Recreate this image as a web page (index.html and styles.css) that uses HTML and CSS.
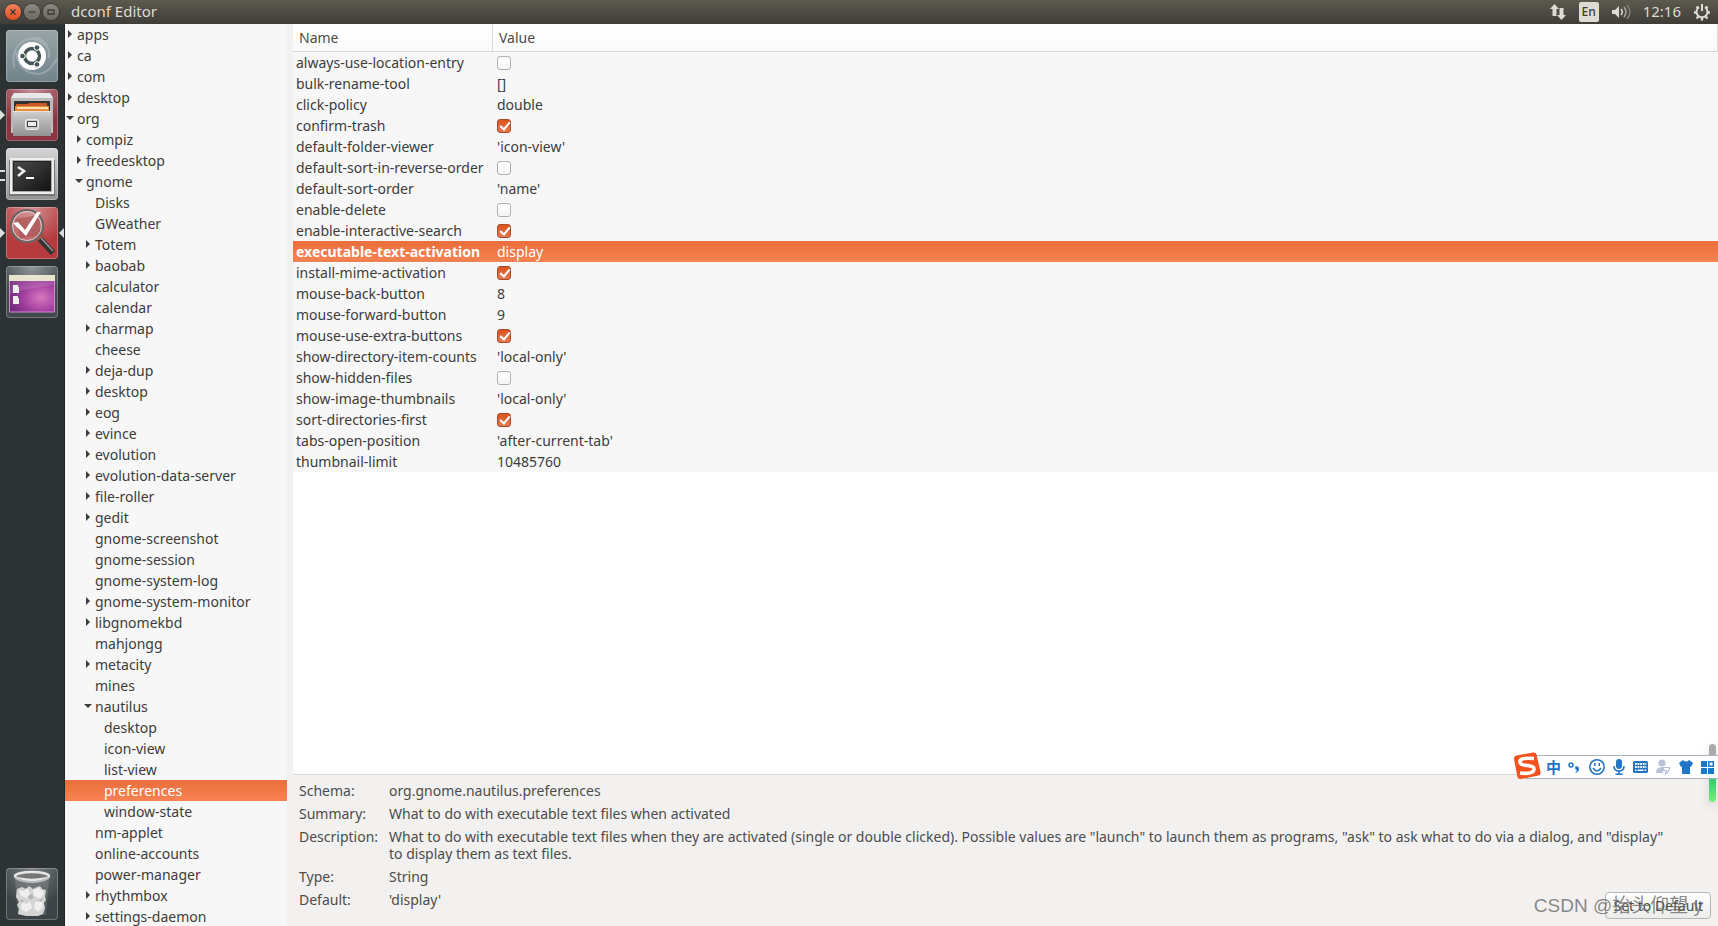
FILE: index.html
```html
<!DOCTYPE html>
<html lang="en">
<head>
<meta charset="utf-8">
<title>dconf Editor</title>
<link rel="stylesheet" href="styles.css">
</head>
<body>
<header class="panel">
  <div class="window-buttons">
    <button class="wbtn close" aria-label="Close"><svg viewBox="0 0 16 16"><path d="M5.5 5.5l5 5M10.500 5.500l-5 5"/></svg></button>
    <button class="wbtn" aria-label="Minimize"><svg viewBox="0 0 16 16"><path d="M4.500 8h7"/></svg></button>
    <button class="wbtn" aria-label="Maximize"><svg viewBox="0 0 16 16"><path d="M5 6h6v4H5z"/></svg></button>
  </div>
  <h1 class="title">dconf Editor</h1>
  <div class="indicators">
    <svg class="ind" width="18" height="18" viewBox="0 0 18 18"><path fill="#dfdbd2" d="M5.500 1L10 6H7.500v7h-4V6H1zM12.500 17L8 12h2.500V5h4v7H17z"/></svg>
    <span class="lang">En</span>
    <svg class="ind" width="20" height="18" viewBox="0 0 20 18"><path fill="#dfdbd2" d="M1 7h3l4-4v12l-4-4H1z"/><g fill="none" stroke-width="1.500"><path stroke="#dfdbd2" d="M10 6q2.500 3 0 6"/><path stroke="#aaa79f" d="M13 4q4 5 0 10"/><path stroke="#817e76" d="M16 2q6 7 0 14"/></g></svg>
    <time>12:16</time>
    <svg class="ind" width="18" height="18" viewBox="0 0 18 18"><g fill="none" stroke="#dfdbd2"><path stroke-width="2" d="M6 4.200A5.500 5.500 0 1 0 12 4.200M9 1v7"/><path stroke-width="2.400" d="M3.500 3.500l2 2M14.500 3.500l-2 2M1 9.500h2.500M17 9.500h-2.500M3.500 15.500l2-2M14.500 15.500l-2-2M9 17.500V15"/></g></svg>
  </div>
</header>
<div class="workspace">
  <nav class="launcher" aria-label="Launcher">
    <button class="app dash" aria-label="Search your computer"><svg viewBox="0 0 52 52"><g fill="none" stroke="#b8c4c8" stroke-opacity=".45" stroke-width="2"><path d="M8 38Q4 8 31 8Q44 12 43 28M10 22Q13 43 32 44Q44 43 51 28M15 12Q30 4 42 18"/></g><circle cx="26" cy="26" r="14" fill="#fff"/><circle cx="26" cy="26" r="7.500" fill="none" stroke="#45565b" stroke-width="3.400"/><g fill="#45565b" stroke="#fff"><circle cx="16.500" cy="26" r="2.800"/><circle cx="31" cy="17.600" r="2.800"/><circle cx="31" cy="34.400" r="2.800"/></g></svg></button>
    <button class="app files running" aria-label="Files"><svg viewBox="0 0 52 52"><defs><linearGradient id="gf" x2="0" y2="1"><stop stop-color="#cfcfcf"/><stop offset="1" stop-color="#929292"/></linearGradient></defs><path fill="#999" d="M5 8l3-4h36l3 4v36H5z"/><path fill="#e8e8e8" d="M5 9l3-5h36l3 5z"/><path fill="#bcbcbc" d="M5 9h42v35H5z"/><path fill="#333" d="M8 12h36v12H8z"/><path fill="#cb5b22" d="M10 15h12l1-1h18v4H10z"/><path fill="#ef8b3c" d="M9 17h34v7H9z"/><path fill="#ffe2ad" d="M11 18h31v2H11z"/><path fill="url(#gf)" d="M7 22h38v25H7z"/><path fill="#e2e2e2" d="M7 22h38v1H7z"/><rect x="19.500" y="30.500" width="13" height="10" rx="2" fill="#ccc" stroke="#eee"/><rect x="21.500" y="32.500" width="9" height="5" fill="#eee" stroke="#444"/></svg></button>
    <button class="app terminal running double" aria-label="Terminal"><svg viewBox="0 0 52 52"><defs><linearGradient id="gt" x2="1" y2="1"><stop stop-color="#4a4a4a"/><stop offset=".5" stop-color="#303030"/><stop offset="1" stop-color="#111"/></linearGradient></defs><path fill="#777" d="M3 12h46v36H3z"/><path fill="#eee" d="M4 10h44v36H4z"/><path fill="#aaa" d="M6 12h40v32H6z"/><path fill="url(#gt)" stroke="#222" d="M7.500 13.500h37v29h-37z"/><path fill="none" stroke="#eee" stroke-width="2.600" d="M12 19l6 4-6 5"/><path stroke="#fff" stroke-width="2" d="M20 30h8"/></svg></button>
    <button class="app dconf running focused" aria-label="dconf Editor"><svg viewBox="0 0 52 52"><path fill="#8c2528" fill-opacity=".7" d="M9 12l23-4 5 20-23 3z"/><circle cx="21" cy="19" r="16" fill="#d8a0a0" fill-opacity=".4" stroke="#686664" stroke-width="2.200"/><circle cx="21" cy="19" r="14.500" fill="none" stroke="#ded0cf"/><path fill="#fff" d="M7 16l5-1 7 8L31 5h4L20 29z"/><path stroke="#333" stroke-width="6" d="M34 32l13 14"/><path stroke="#999" stroke-width="1.400" d="M35 31l12 13"/></svg></button>
    <button class="app desk" aria-label="Show desktop"><svg viewBox="0 0 52 52"><defs><radialGradient id="gp" cx=".7" cy=".6" r=".8"><stop stop-color="#d879be"/><stop offset=".45" stop-color="#a744a3"/><stop offset="1" stop-color="#672474"/></radialGradient></defs><path fill="url(#gp)" stroke="#d68ad2" d="M3.500 10h45v36h-45z"/><path fill="#e9e5cf" d="M3 9h46v6H3z"/><path fill="#fff" fill-opacity=".13" d="M4 15h44v4Q22 22 4 28z"/><path fill="#eee" d="M7 19h5v2h1v6H7zM7 30h5v2h1v6H7z"/></svg></button>
    <button class="app trash" aria-label="Trash"><svg viewBox="0 0 52 52"><path fill="#aaa" fill-opacity=".25" d="M9 12h34l-3 35H12z"/><path fill="#d4d4d4" d="M11 21l5-2 4 2 3-3 4 3 4-2 3-1 2 3 4 1-1 7 1 3-2 3 1 5-2 6-5 2H20l-8-2 1-5-2-4 2-3-3-5z"/><path fill="#efefef" d="M13 22l5 1 3-3 3 5-3 5-6-2zM27 22l6-2 5 5-4 6-6-3zM16 34l5 2 3-3 2 7-6 4-5-3zM29 34l7-1 1 6-5 5-4-4z"/><path fill="#b4b4b4" d="M22 28l4-2 2 4-4 2zM32 32l5-2-2 4zM14 31l4 2-2 2z"/><ellipse cx="26" cy="8" rx="17" ry="4" fill="#777" stroke="#e6e6e6" stroke-width="2.500"/><path fill="none" stroke="#bbb" stroke-width="2" d="M9 10q17 8 34 0"/></svg></button>
  </nav>
  <ul class="tree" id="tree"></ul>
  <main class="content">
    <table class="keys">
      <thead><tr><th scope="col">Name</th><th scope="col">Value</th></tr></thead>
      <tbody id="keys"></tbody>
    </table>
    <section class="details">
      <dl>
        <dt>Schema:</dt><dd>org.gnome.nautilus.preferences</dd>
        <dt>Summary:</dt><dd>What to do with executable text files when activated</dd>
        <dt>Description:</dt><dd>What to do with executable text files when they are activated (single or double clicked). Possible values are "launch" to launch them as programs, "ask" to ask what to do via a dialog, and "display" to display them as text files.</dd>
        <dt>Type:</dt><dd>String</dd>
        <dt>Default:</dt><dd>'display'</dd>
      </dl>
      <button class="default-btn">Set to Default</button>
    </section>
  </main>
</div>
<div class="scroll-thumb"></div>
<div class="ime">
  <svg class="ime-logo" width="30" height="30" viewBox="0 0 30 30"><path fill="#f4511e" d="M2 8Q1.500 5 4.500 4.500L21 1.500q3-.5 3.500 2L28.500 21q.5 3-2 3.500L9 28q-3 .5-3.500-2z"/><path fill="none" stroke="#fff" stroke-width="3.600" d="M22 7.500Q7 6 8 11.500c1 5 14 1 14 6.500 0 4-6 5-14 4"/></svg>
  <span class="ime-zh">中</span>
  <svg width="14" height="18" viewBox="0 0 14 18"><circle cx="4" cy="7" r="2" fill="none" stroke="#2175c9" stroke-width="1.500"/><path fill="#2175c9" d="M8 9q4-2 4 2 0 3-4 4 2-2 2-3-2 0-2-3z"/></svg>
  <svg width="18" height="18" viewBox="0 0 18 18"><g fill="none" stroke="#2175c9" stroke-width="1.600"><circle cx="9" cy="9" r="7.200"/><path d="M5 10q4 6 8 0"/></g><path fill="#2175c9" d="M6 5h1.500v3H6zM10.500 5H12v3h-1.500z"/></svg>
  <svg width="14" height="18" viewBox="0 0 14 18"><rect x="4" y="1" width="6" height="10" rx="3" fill="#2175c9"/><path fill="none" stroke="#2175c9" stroke-width="1.600" d="M2 8q0 5 5 5t5-5M7 13v3M3.500 16.200h7"/></svg>
  <svg width="17" height="18" viewBox="0 0 17 18"><rect x="1" y="3" width="15" height="12" rx="1.500" fill="#2175c9"/><path stroke="#fff" stroke-width="2" stroke-dasharray="1.800 .8" d="M3 6h11.400M3 9h11.400"/><path stroke="#fff" stroke-width="1.600" d="M3 12.200h1.500M5.500 12.200h6M12.600 12.200h1.600"/></svg>
  <svg width="16" height="18" viewBox="0 0 16 18"><g fill="#b6c2d8"><circle cx="7" cy="5" r="3.500"/><path d="M1 15q0-6 6-6 3 0 4 1H8v5z"/></g><path fill="#fff" stroke="#b6c2d8" stroke-width="1.200" d="M8.500 9.500h6q0 4-4 6.500 1-2 1-3.500h-3z"/></svg>
  <svg width="16" height="18" viewBox="0 0 16 18"><path fill="#2175c9" d="M5 2q3 3 6 0l4 3-2 4-1-.5V16H4V8.500L3 9 1 5z"/></svg>
  <svg width="15" height="18" viewBox="0 0 15 18"><path fill="#2175c9" d="M1 3h6v6H1zM1 10h6v6H1zM8 10h6v6H8z"/><path fill="#fff" stroke="#2175c9" stroke-width="1.500" d="M8.800 3.800h4.500v4.500H8.800z"/></svg>
</div>
<div class="watermark">CSDN @抬头仰望 y</div>
<script src="app.js"></script>
</body>
</html>
```
FILE: styles.css
```css
* { box-sizing: border-box; }
body {
  margin: 0;
  height: 100vh;
  overflow: hidden;
  display: flex;
  flex-direction: column;
  font: 14px/21px "Noto Sans", "Noto Sans CJK SC", sans-serif;
  color: #3c3c3c;
  background: #f2f1f0;
}
button { font: inherit; color: inherit; padding: 0; border: 0; }
.panel {
  flex: none;
  height: 24px;
  display: flex;
  align-items: center;
  padding: 0 7px 1px 5px;
  background: linear-gradient(#5c594f, #3e3d38);
  color: #dfdbd2;
  font-size: 15px;
}
.window-buttons { display: flex; gap: 3px; }
.wbtn {
  width: 16px;
  height: 16px;
  border-radius: 50%;
  background: linear-gradient(#8b8981, #696760);
  box-shadow: 0 0 0 1px #3b3a36;
}
.wbtn.close { background: linear-gradient(#f2835c, #e2501e); }
.wbtn svg { display: block; fill: none; stroke: #3b3a36; stroke-width: 1.3; }
.title { margin: 0 0 0 12px; font: inherit; }
.indicators { margin-left: auto; display: flex; align-items: center; gap: 12px; }
.ind { flex: none; }
.lang {
  width: 20px;
  height: 20px;
  border-radius: 2px;
  background: #dfdbd2;
  color: #3c3b37;
  font-size: 12px;
  font-weight: 500;
  line-height: 20px;
  text-align: center;
}
.workspace { flex: 1; min-height: 0; display: flex; }
.launcher {
  flex: none;
  width: 65px;
  display: flex;
  flex-direction: column;
  align-items: center;
  gap: 7px;
  padding: 6px 1px 6px 0;
  background: #2d3335;
  border-right: 1px solid #202526;
}
.app {
  position: relative;
  width: 52px;
  height: 52px;
  border-radius: 4px;
  box-shadow: inset 0 0 0 1px rgba(255, 255, 255, .25);
}
.app svg { display: block; }
.dash { background: linear-gradient(#98a4a8, #71838a); }
.files { background: radial-gradient(circle at 50% 0, #c29096, #8b3540 65%); }
.terminal { background: linear-gradient(#d5d5d5, #949494); }
.dconf { background: radial-gradient(circle at 50% 0, #d49093, #b53b3e 65%); }
.desk { background: radial-gradient(circle at 50% 0, #92989a, #424a4d 60%); }
.trash { margin-top: auto; background: radial-gradient(circle at 50% 0, #7a8183, #3c4447 65%); }
.running::before,
.focused::after {
  content: "";
  position: absolute;
  top: 21px;
  border: 5px solid transparent;
}
.running::before { left: -6px; border-left-color: #ddd; border-right: 0; }
.focused::after { right: -6px; border-right-color: #ddd; border-left: 0; }
.double::before {
  top: 22px;
  width: 5px;
  height: 7px;
  border: solid #ddd;
  border-width: 2px 0;
}
.tree {
  flex: none;
  width: 222px;
  margin: 0;
  padding: 0;
  list-style: none;
  overflow: hidden;
  background: #f7f7f7;
}
.node { display: flex; align-items: center; height: 21px; padding-left: 3px; }
.node.d1 { padding-left: 12px; }
.node.d2 { padding-left: 21px; }
.node.d3 { padding-left: 30px; }
.arrow { flex: none; width: 9px; height: 10px; }
.arrow::before { content: ""; display: block; width: 0; border: 4px solid transparent; border-left: 4px solid #3c3c3c; border-right: 0; }
.arrow.open { margin-left: -2px; width: 11px; }
.arrow.open::before { margin-top: 2px; border: 4px solid transparent; border-top: 4px solid #3c3c3c; border-bottom: 0; }
.arrow.leaf::before { display: none; }
.selected { background: linear-gradient(#e96e3c, #f88352); color: #fff; }
.content {
  flex: 1;
  min-width: 0;
  margin-left: 6px;
  display: flex;
  flex-direction: column;
  background: #fff;
}
.keys { width: 100%; border-collapse: separate; border-spacing: 0; table-layout: fixed; }
.keys th {
  height: 28px;
  padding: 0 6px;
  border-right: 1px solid #d9d8d7;
  border-bottom: 1px solid #d9d8d7;
  font-weight: 400;
  text-align: left;
  color: #4c4c4c;
  background: linear-gradient(#fff, #fafafa);
}
.keys th:first-child { width: 200px; }
.keys td { height: 21px; padding: 0 3px; white-space: nowrap; }
.keys td + td { padding-left: 4px; }
.keys tbody tr { background: #f7f7f7; }
.keys tbody tr.selected { background: linear-gradient(#e96e3c, #f88352); }
.selected td:first-child { font-weight: 700; }
.keys input {
  appearance: none;
  display: block;
  width: 14px;
  height: 14px;
  margin: 0;
  border: 1px solid #b3b0ad;
  border-radius: 3px;
  background: linear-gradient(#fff, #f5f5f5);
}
.keys input:checked {
  border-color: #a94b2a;
  background: linear-gradient(#d9531e, #e57a50);
}
.keys input:checked::before {
  content: "";
  display: block;
  width: 4px;
  height: 8px;
  margin: 0 0 0 4px;
  border: solid #fff;
  border-width: 0 2px 2px 0;
  transform: rotate(40deg);
}
.details {
  position: relative;
  margin-top: auto;
  padding: 7px 6px 18px;
  border-top: 1px solid #d9d8d7;
  background: #f2f1f0;
  color: #4c4c4c;
  line-height: 17px;
}
.details dl { display: grid; grid-template-columns: 84px 1fr; gap: 6px; margin: 0; }
.details dd { margin: 0; padding-right: 40px; }
.default-btn {
  position: absolute;
  right: 7px;
  bottom: 7px;
  height: 27px;
  padding: 0 7px;
  border: 1px solid #b8b5b2;
  border-radius: 4px;
  background: linear-gradient(#fff, #ececeb);
}
.scroll-thumb {
  position: absolute;
  right: 2px;
  top: 744px;
  width: 7px;
  height: 58px;
  border-radius: 4px;
  background: linear-gradient(#aaa 50%, #2ecc71 60%, #7bed76);
  box-shadow: 0 4px 8px 2px rgba(0, 0, 0, .08);
}
.ime {
  position: absolute;
  right: 0;
  top: 755px;
  width: 193px;
  height: 24px;
  display: flex;
  align-items: center;
  justify-content: space-between;
  padding: 0 3px 0 21px;
  border: solid #aab4c0;
  border-width: 1px 0;
  background: #fff;
}
.ime-logo { position: absolute; left: -13px; top: -5px; }
.ime-zh { font: 700 15px/20px "Noto Sans CJK SC", sans-serif; color: #2175c9; }
.watermark {
  position: absolute;
  right: 15px;
  bottom: 8px;
  font: 19px/24px "Liberation Sans", "Noto Sans CJK SC", sans-serif;
  color: rgba(100, 100, 100, .75);
  pointer-events: none;
}
```
FILE: app.js
```js
// Each tree entry: depth, state (">" closed, "v" open, "-" leaf), name
const nodes = `0>apps 0>ca 0>com 0>desktop 0vorg 1>compiz 1>freedesktop 1vgnome
2-Disks 2-GWeather 2>Totem 2>baobab 2-calculator 2-calendar 2>charmap 2-cheese
2>deja-dup 2>desktop 2>eog 2>evince 2>evolution 2>evolution-data-server
2>file-roller 2>gedit 2-gnome-screenshot 2-gnome-session 2-gnome-system-log
2>gnome-system-monitor 2>libgnomekbd 2-mahjongg 2>metacity 2-mines 2vnautilus
3-desktop 3-icon-view 3-list-view 3-preferences 3-window-state 2-nm-applet
2-online-accounts 2-power-manager 2>rhythmbox 2>settings-daemon`.split(/\s+/);
const states = { ">": "", "v": " open", "-": " leaf" };
document.getElementById("tree").innerHTML = nodes.map(n => {
  const name = n.slice(2);
  const sel = name === "preferences" ? " selected" : "";
  return `<li class="node d${n[0]}${sel}"><span class="arrow${states[n[1]]}"></span>${name}</li>`;
}).join("");

const keys = [
  ["always-use-location-entry", false], ["bulk-rename-tool", "[]"],
  ["click-policy", "double"], ["confirm-trash", true],
  ["default-folder-viewer", "'icon-view'"], ["default-sort-in-reverse-order", false],
  ["default-sort-order", "'name'"], ["enable-delete", false],
  ["enable-interactive-search", true], ["executable-text-activation", "display"],
  ["install-mime-activation", true], ["mouse-back-button", "8"],
  ["mouse-forward-button", "9"], ["mouse-use-extra-buttons", true],
  ["show-directory-item-counts", "'local-only'"], ["show-hidden-files", false],
  ["show-image-thumbnails", "'local-only'"], ["sort-directories-first", true],
  ["tabs-open-position", "'after-current-tab'"], ["thumbnail-limit", "10485760"]
];
document.getElementById("keys").innerHTML = keys.map(([k, v]) => {
  const bool = typeof v === "boolean";
  const label = bool ? `<label for="${k}">${k}</label>` : k;
  const value = bool ? `<input type="checkbox" id="${k}"${v ? " checked" : ""}>` : v;
  const sel = k === "executable-text-activation" ? ' class="selected"' : "";
  return `<tr${sel}><td>${label}</td><td>${value}</td></tr>`;
}).join("");
```
